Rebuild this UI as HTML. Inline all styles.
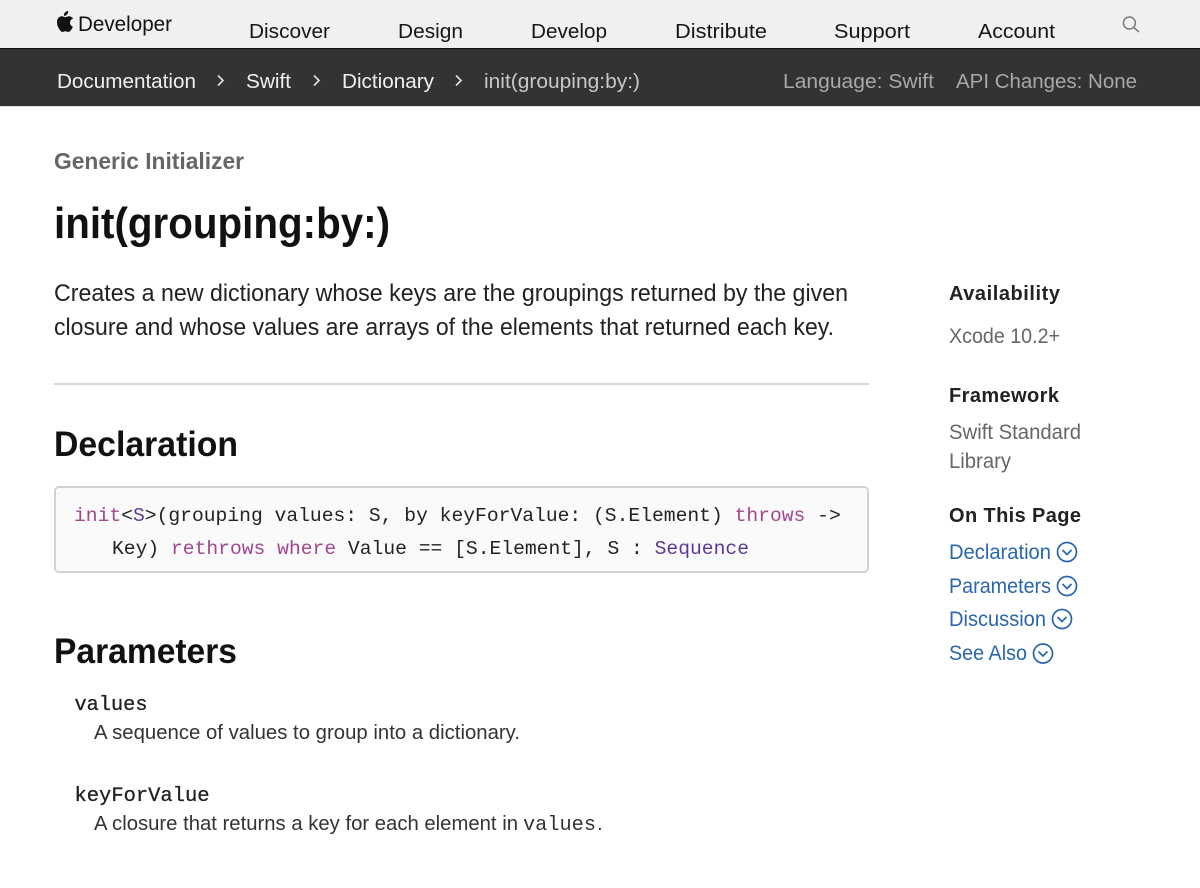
<!DOCTYPE html>
<html lang="en">
<head>
<meta charset="utf-8">
<title>init(grouping:by:)</title>
<style>
html,body{margin:0;padding:0;background:#fff;width:1200px;height:888px;overflow:hidden}
svg{display:block}
text{font-family:"Liberation Sans",sans-serif;white-space:pre}
.nav{font-size:20px;fill:#161616}
.bc{font-size:20.5px;fill:#f0f0f0}
.bd{font-size:20.5px;fill:#a8a8a8}
.body{font-size:24px;fill:#222}
.h2{font-size:35px;font-weight:700;fill:#111}
.side{font-size:20px;font-weight:700;fill:#222}
.val{font-size:21px;fill:#666}
.lnk{font-size:21px;fill:#2a66ae}
.p{font-size:20.5px;fill:#333}
.code{font-family:"Liberation Mono",monospace;font-size:19.66px;fill:#222}
.k{fill:#a0478f}
.t{fill:#5c3a94}
.m{font-family:"Liberation Mono",monospace;font-size:20px;fill:#222;stroke:#222;stroke-width:.3px}
</style>
</head>
<body>
<svg width="1200" height="888" viewBox="0 0 1200 888" xmlns="http://www.w3.org/2000/svg">
<rect width="1200" height="49" fill="#f0f0f0"/>
<rect y="48" width="1200" height="1" fill="#111"/>
<rect y="49" width="1200" height="57" fill="#333"/>
<rect y="106" width="1200" height="1" fill="#ddd"/>

<path d="M68.200 11c.1 1.400-.4 2.600-1.200 3.500-.8.900-2 1.500-3.100 1.400-.2-1.300.4-2.600 1.100-3.400.8-.9 2.100-1.500 3.200-1.500z" fill="#111"/>
<path d="M72.300 18.900c-1.600 1-2.400 2.300-2.300 4 .1 1.800 1.100 3.100 2.800 3.800-.4 1.200-1 2.300-1.700 3.300-.9 1.200-1.700 1.900-2.700 1.900-1.200 0-1.700-.7-3-.7s-1.900.7-3 .7c-1.100 0-1.900-.8-2.800-2.100-1.600-2.300-2.600-5.100-2.600-7.700 0-3.500 2.300-5.800 4.900-5.800 1.400 0 2.500.9 3.400.9.900 0 2.100-1 3.700-1 1.500 0 3 .7 4.300 2.700z" fill="#111"/>
<text x="78" y="31" font-size="21.500" fill="#111" textLength="94" lengthAdjust="spacingAndGlyphs">Developer</text>

<text class="nav" x="249" y="38" textLength="81" lengthAdjust="spacingAndGlyphs">Discover</text>
<text class="nav" x="398" y="38" textLength="65" lengthAdjust="spacingAndGlyphs">Design</text>
<text class="nav" x="531" y="38" textLength="76" lengthAdjust="spacingAndGlyphs">Develop</text>
<text class="nav" x="675" y="38" textLength="92" lengthAdjust="spacingAndGlyphs">Distribute</text>
<text class="nav" x="834" y="38" textLength="76" lengthAdjust="spacingAndGlyphs">Support</text>
<text class="nav" x="978" y="38" textLength="77" lengthAdjust="spacingAndGlyphs">Account</text>
<g fill="none" stroke="#7a7a7a" stroke-width="1.500"><circle cx="1129.400" cy="23" r="6"/><path d="M1133.800 27.500l5.200 4.500"/></g>

<text class="bc" x="57" y="88" textLength="139" lengthAdjust="spacingAndGlyphs">Documentation</text>
<text class="bc" x="246" y="88" textLength="45" lengthAdjust="spacingAndGlyphs">Swift</text>
<text class="bc" x="342" y="88" textLength="92" lengthAdjust="spacingAndGlyphs">Dictionary</text>
<text class="bc" x="484" y="88" style="fill:#c8c8c8" textLength="156" lengthAdjust="spacingAndGlyphs">init(grouping:by:)</text>
<g fill="none" stroke="#dcdcdc" stroke-width="1.700"><path d="M218 75.500l5 5-5 5"/><path d="M314 75.500l5 5-5 5"/><path d="M456 75.500l5 5-5 5"/></g>
<text class="bd" x="783" y="88" textLength="151" lengthAdjust="spacingAndGlyphs">Language: Swift</text>
<text class="bd" x="956" y="88" textLength="181" lengthAdjust="spacingAndGlyphs">API Changes: None</text>

<text x="54" y="169" font-size="23" font-weight="700" fill="#666" textLength="190" lengthAdjust="spacingAndGlyphs">Generic Initializer</text>
<text x="54" y="238" font-size="44" font-weight="700" fill="#111" textLength="336" lengthAdjust="spacingAndGlyphs">init(grouping:by:)</text>

<text class="body" x="54" y="301" textLength="794" lengthAdjust="spacingAndGlyphs">Creates a new dictionary whose keys are the groupings returned by the given</text>
<text class="body" x="54" y="335" textLength="780" lengthAdjust="spacingAndGlyphs">closure and whose values are arrays of the elements that returned each key.</text>

<rect x="54" y="383" width="815" height="2" fill="#d6d6d6"/>

<text class="h2" x="54" y="456" textLength="184" lengthAdjust="spacingAndGlyphs">Declaration</text>

<rect x="55" y="487" width="813" height="85" rx="4" fill="#fafafa" stroke="#d2d2d2" stroke-width="2"/>
<text class="code" x="74" y="521"><tspan class="k">init</tspan>&lt;<tspan class="t">S</tspan>&gt;(grouping values: S, by keyForValue: (S.Element) <tspan class="k">throws</tspan> -&gt;</text>
<text class="code" x="112" y="554">Key) <tspan class="k">rethrows</tspan> <tspan class="k">where</tspan> Value == [S.Element], S : <tspan class="t">Sequence</tspan></text>

<text class="h2" x="54" y="663" textLength="183" lengthAdjust="spacingAndGlyphs">Parameters</text>

<text class="m" x="74.500" y="710" textLength="73" lengthAdjust="spacingAndGlyphs">values</text>
<text class="p" x="94" y="739" textLength="426" lengthAdjust="spacingAndGlyphs">A sequence of values to group into a dictionary.</text>
<text class="m" x="74.500" y="801" textLength="135" lengthAdjust="spacingAndGlyphs">keyForValue</text>
<text class="p" x="94" y="830" textLength="424" lengthAdjust="spacingAndGlyphs">A closure that returns a key for each element in</text>
<text x="523" y="830" font-size="20" style="font-family:'Liberation Mono',monospace;fill:#333" textLength="73" lengthAdjust="spacingAndGlyphs">values</text>
<text class="p" x="597" y="830">.</text>

<text class="side" x="949" y="300" textLength="111" lengthAdjust="spacing">Availability</text>
<text class="val" x="949" y="343" textLength="111" lengthAdjust="spacingAndGlyphs">Xcode 10.2+</text>
<text class="side" x="949" y="402" textLength="110" lengthAdjust="spacing">Framework</text>
<text class="val" x="949" y="439" textLength="132" lengthAdjust="spacingAndGlyphs">Swift Standard</text>
<text class="val" x="949" y="468" textLength="62" lengthAdjust="spacingAndGlyphs">Library</text>
<text class="side" x="949" y="522" textLength="132" lengthAdjust="spacing">On This Page</text>

<text class="lnk" x="949" y="559" textLength="102" lengthAdjust="spacingAndGlyphs">Declaration</text>
<text class="lnk" x="949" y="593" textLength="102" lengthAdjust="spacingAndGlyphs">Parameters</text>
<text class="lnk" x="949" y="626" textLength="97" lengthAdjust="spacingAndGlyphs">Discussion</text>
<text class="lnk" x="949" y="660" textLength="78" lengthAdjust="spacingAndGlyphs">See Also</text>
<g fill="none" stroke="#2a66ae" stroke-width="1.700">
<circle cx="1067" cy="552" r="9.500"/><path d="M1062.500 550l4.500 4.500 4.500-4.500"/>
<circle cx="1067" cy="586" r="9.500"/><path d="M1062.500 584l4.500 4.500 4.500-4.500"/>
<circle cx="1062" cy="619" r="9.500"/><path d="M1057.500 617l4.500 4.500 4.500-4.500"/>
<circle cx="1043" cy="653.500" r="9.500"/><path d="M1038.500 651.500l4.500 4.500 4.500-4.500"/>
</g>
</svg>
</body>
</html>
